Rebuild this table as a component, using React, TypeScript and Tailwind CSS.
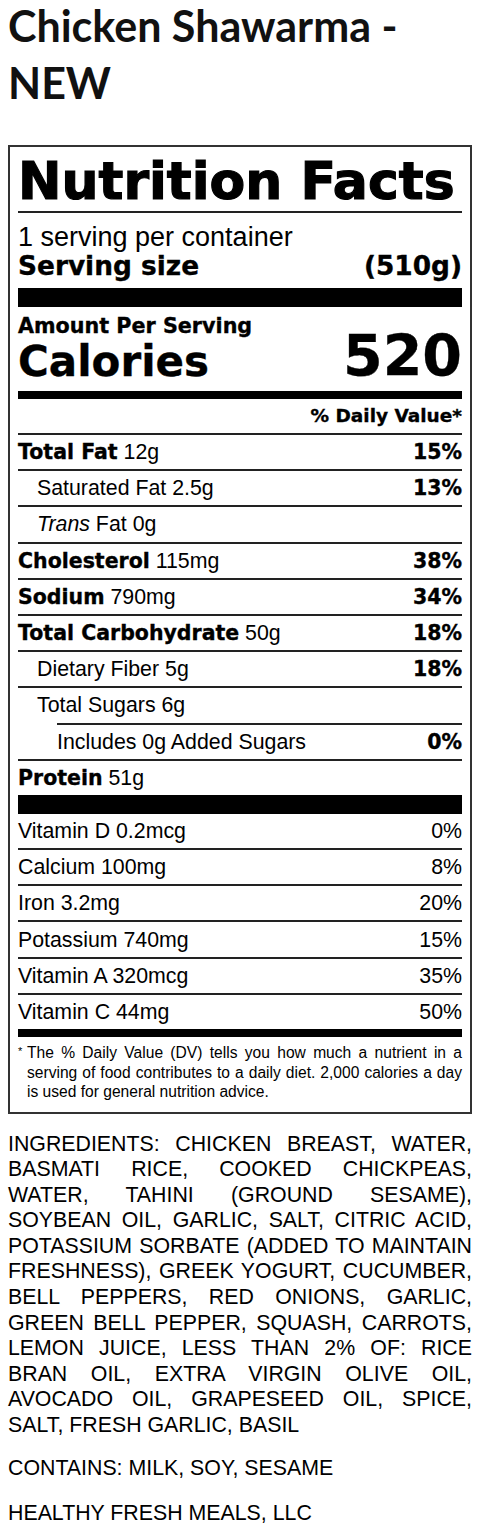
import React from "react";

const B = "font-['DejaVu_Sans',sans-serif] font-bold [-webkit-text-stroke:0.35px_black]";
const R = "font-['Liberation_Sans',Arial,sans-serif]";

type Row = {
  label: React.ReactNode;
  amount: string;
  dv?: string;
  bold?: boolean;
  indent?: 0 | 1 | 2;
};

const rows: Row[] = [
  { label: "Total Fat", amount: "12g", dv: "15%", bold: true },
  { label: "Saturated Fat", amount: "2.5g", dv: "13%", indent: 1 },
  {
    label: (
      <>
        <i>Trans</i> Fat
      </>
    ),
    amount: "0g",
    indent: 1,
  },
  { label: "Cholesterol", amount: "115mg", dv: "38%", bold: true },
  { label: "Sodium", amount: "790mg", dv: "34%", bold: true },
  { label: "Total Carbohydrate", amount: "50g", dv: "18%", bold: true },
  { label: "Dietary Fiber", amount: "5g", dv: "18%", indent: 1 },
  { label: "Total Sugars", amount: "6g", indent: 1 },
  { label: "Includes 0g Added Sugars", amount: "", dv: "0%", indent: 2 },
  { label: "Protein", amount: "51g", bold: true },
];

const vitamins = [
  ["Vitamin D 0.2mcg", "0%"],
  ["Calcium 100mg", "8%"],
  ["Iron 3.2mg", "20%"],
  ["Potassium 740mg", "15%"],
  ["Vitamin A 320mcg", "35%"],
  ["Vitamin C 44mg", "50%"],
];

function NutrientRow({ row, first }: { row: Row; first: boolean }) {
  const wrap = row.indent === 2 ? "ml-[39px]" : "";
  const textIndent = row.indent === 1 ? "pl-[19px]" : "";
  return (
    <div
      className={`${wrap} ${first ? "h-[34.2px]" : "h-[36.2px] border-t-2 border-[#222]"} flex items-center justify-between`}
    >
      <div className={`${textIndent} ${R} text-[21.33px] leading-[34px] text-black`}>
        {row.bold ? (
          <span className={`${B} text-[20.5px]`}>{row.label}</span>
        ) : (
          <span>{row.label}</span>
        )}
        {row.amount ? <span> {row.amount}</span> : null}
      </div>
      {row.dv ? (
        <div className={`${B} text-[20.5px] leading-[34px] text-black`}>{row.dv}</div>
      ) : null}
    </div>
  );
}

export default function App() {
  return (
    <div className="w-[480px] bg-white px-2 pb-6 text-black">
      <h1 className="font-['Lato',sans-serif] text-[43px] font-bold leading-[52px] text-[#111]">
        <span className="block">Chicken Shawarma -</span>
        <span className="mt-[5px] block">NEW</span>
      </h1>

      <div className="mt-[36px] border-2 border-[#333] px-2 pb-[10px] pt-[9px]">
        <div
          className={`${B} border-b-2 border-[#222] pb-[4px] text-[52px] leading-[51px] [-webkit-text-stroke:1.2px_black]`}
        >
          Nutrition Facts
        </div>

        <div className={`${R} mt-[10px] text-[27px] leading-[28px]`}>1 serving per container</div>
        <div className={`${B} flex justify-between text-[26.4px] leading-[29px]`}>
          <span>Serving size</span>
          <span>(510g)</span>
        </div>

        <div className="mt-[8px] h-[19px] bg-black" />

        <div className={`${B} mt-[9px] text-[20.7px] leading-[20px]`}>Amount Per Serving</div>
        <div
          className={`${B} flex items-baseline justify-between leading-[40px] [-webkit-text-stroke:0.9px_black]`}
        >
          <span className="text-[42px]">Calories</span>
          <span className="text-[57px]">520</span>
        </div>

        <div className="mt-[9px] h-[8px] bg-black" />

        <div
          className={`${B} border-b-2 border-[#222] pb-[6px] pt-[6px] text-right text-[18.5px] leading-[22px]`}
        >
          % Daily Value*
        </div>

        {rows.map((r, i) => (
          <NutrientRow key={i} row={r} first={i === 0} />
        ))}

        <div className="h-[19px] bg-black" />

        {vitamins.map(([name, dv], i) => (
          <div
            key={name}
            className={`${i === 0 ? "h-[34.2px]" : "h-[36.2px] border-t-2 border-[#222]"} ${R} flex items-center justify-between text-[21.33px] leading-[34px]`}
          >
            <span>{name}</span>
            <span>{dv}</span>
          </div>
        ))}

        <div className="h-[8px] bg-black" />

        <div className={`${R} flex pt-[6px] text-[15.6px] leading-[19.5px]`}>
          <span className="w-[9px] shrink-0 text-[11px] leading-[16px]">*</span>
          <p className="text-justify">
            The % Daily Value (DV) tells you how much a nutrient in a serving of food contributes
            to a daily diet. 2,000 calories a day is used for general nutrition advice.
          </p>
        </div>
      </div>

      <div className={`${R} text-[21.33px] leading-[25.6px]`}>
        <p className="mt-[18px] text-justify">
          INGREDIENTS: CHICKEN BREAST, WATER, BASMATI RICE, COOKED CHICKPEAS, WATER, TAHINI
          (GROUND SESAME), SOYBEAN OIL, GARLIC, SALT, CITRIC ACID, POTASSIUM SORBATE (ADDED TO
          MAINTAIN FRESHNESS), GREEK YOGURT, CUCUMBER, BELL PEPPERS, RED ONIONS, GARLIC, GREEN
          BELL PEPPER, SQUASH, CARROTS, LEMON JUICE, LESS THAN 2% OF: RICE BRAN OIL, EXTRA VIRGIN
          OLIVE OIL, AVOCADO OIL, GRAPESEED OIL, SPICE, SALT, FRESH GARLIC, BASIL
        </p>
        <p className="mt-[17px]">CONTAINS: MILK, SOY, SESAME</p>
        <p className="mt-[20px]">HEALTHY FRESH MEALS, LLC</p>
      </div>
    </div>
  );
}
